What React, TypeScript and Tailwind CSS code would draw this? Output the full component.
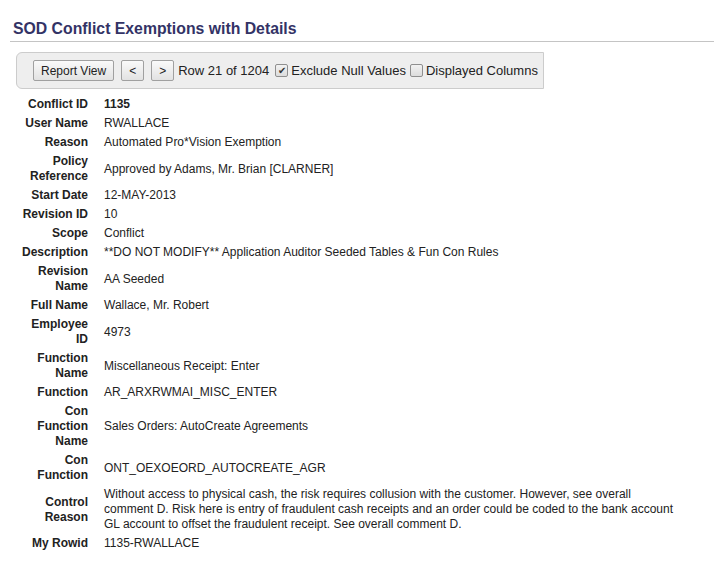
const rows: { label: string; value: string; bold?: boolean }[] = [
  { label: "Conflict ID", value: "1135", bold: true },
  { label: "User Name", value: "RWALLACE" },
  { label: "Reason", value: "Automated Pro*Vision Exemption" },
  { label: "Policy Reference", value: "Approved by Adams, Mr. Brian [CLARNER]" },
  { label: "Start Date", value: "12-MAY-2013" },
  { label: "Revision ID", value: "10" },
  { label: "Scope", value: "Conflict" },
  {
    label: "Description",
    value: "**DO NOT MODIFY** Application Auditor Seeded Tables & Fun Con Rules",
  },
  { label: "Revision Name", value: "AA Seeded" },
  { label: "Full Name", value: "Wallace, Mr. Robert" },
  { label: "Employee ID", value: "4973" },
  { label: "Function Name", value: "Miscellaneous Receipt: Enter" },
  { label: "Function", value: "AR_ARXRWMAI_MISC_ENTER" },
  { label: "Con Function Name", value: "Sales Orders: AutoCreate Agreements" },
  { label: "Con Function", value: "ONT_OEXOEORD_AUTOCREATE_AGR" },
  {
    label: "Control Reason",
    value:
      "Without access to physical cash, the risk requires collusion with the customer. However, see overall comment D. Risk here is entry of fraudulent cash receipts and an order could be coded to the bank account GL account to offset the fraudulent receipt. See overall comment D.",
  },
  { label: "My Rowid", value: "1135-RWALLACE" },
];

function ToolButton({ children }: { children: React.ReactNode }) {
  return (
    <button className="h-[21px] px-[7px] text-[12px] leading-none text-[#222] border border-[#a0a0a0] rounded-[2px] bg-gradient-to-b from-[#fafafa] to-[#e2e2e2]">
      {children}
    </button>
  );
}

function Check({ checked }: { checked?: boolean }) {
  return (
    <span className="inline-flex items-center justify-center w-[13px] h-[13px] border border-[#8f8f8f] rounded-[2px] bg-gradient-to-b from-[#f2f2f2] to-[#dcdcdc] text-[10px] leading-none text-[#333]">
      {checked ? "✔" : ""}
    </span>
  );
}

export default function App() {
  return (
    <div className="w-[727px] h-[563px] bg-white font-['Liberation_Sans',Arial,sans-serif] text-[#222]">
      <div className="ml-[10px] w-[704px] border-b border-[#c4c4c4] pt-[19px] pb-[2px]">
        <h1 className="pl-[3px] text-[15.8px] leading-[20px] font-bold text-[#333366]">
          SOD Conflict Exemptions with Details
        </h1>
      </div>

      <div className="ml-[16px] mt-[10px] inline-flex h-[37px] items-center gap-[7px] pl-[16px] pr-[5px] bg-[#eeeeee] border border-[#cccccc] rounded-l-[6px] text-[13px]">
        <ToolButton>Report View</ToolButton>
        <ToolButton>&lt;</ToolButton>
        <ToolButton>&gt;</ToolButton>
        <span className="-ml-[3px]">Row 21 of 1204</span>
        <span className="inline-flex items-center gap-[3px] -ml-[1px]">
          <Check checked />
          Exclude Null Values
        </span>
        <span className="inline-flex items-center gap-[3px] -ml-[3px]">
          <Check />
          Displayed Columns
        </span>
      </div>

      <div className="mt-[6px] ml-[20px] flex flex-col text-[12px] leading-[15px]">
        {rows.map((r) => (
          <div key={r.label} className="flex items-center py-[2px]">
            <div className="w-[68px] text-right font-bold text-[#222]">{r.label}</div>
            <div className={`ml-[16px] w-[578px] text-[#222] ${r.bold ? "font-bold" : ""}`}>
              {r.value}
            </div>
          </div>
        ))}
      </div>
    </div>
  );
}
